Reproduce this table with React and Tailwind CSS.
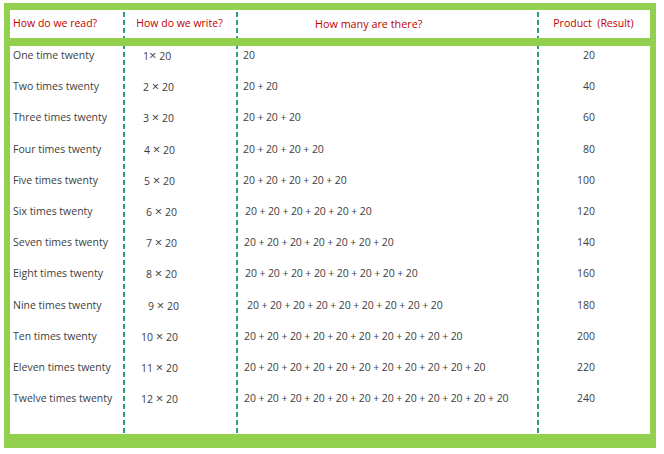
const rows = [
  { read: 'One time twenty', n: '1', sp: '', wpad: 'pl-[20px]', many: 1, mpad: 'pl-[7px]', result: 20 },
  { read: 'Two times twenty', n: '2', sp: ' ', wpad: 'pl-[20px]', many: 2, mpad: 'pl-[7px]', result: 40 },
  { read: 'Three times twenty', n: '3', sp: ' ', wpad: 'pl-[20px]', many: 3, mpad: 'pl-[7px]', result: 60 },
  { read: 'Four times twenty', n: '4', sp: ' ', wpad: 'pl-[21px]', many: 4, mpad: 'pl-[7px]', result: 80 },
  { read: 'Five times twenty', n: '5', sp: ' ', wpad: 'pl-[21px]', many: 5, mpad: 'pl-[7px]', result: 100 },
  { read: 'Six times twenty', n: '6', sp: ' ', wpad: 'pl-[23px]', many: 6, mpad: 'pl-[9px]', result: 120 },
  { read: 'Seven times twenty', n: '7', sp: ' ', wpad: 'pl-[23px]', many: 7, mpad: 'pl-[8px]', result: 140 },
  { read: 'Eight times twenty', n: '8', sp: ' ', wpad: 'pl-[23px]', many: 8, mpad: 'pl-[9px]', result: 160 },
  { read: 'Nine times twenty', n: '9', sp: ' ', wpad: 'pl-[25px]', many: 9, mpad: 'pl-[11px]', result: 180 },
  { read: 'Ten times twenty', n: '10', sp: ' ', wpad: 'pl-[18px]', many: 10, mpad: 'pl-[8px]', result: 200 },
  { read: 'Eleven times twenty', n: '11', sp: ' ', wpad: 'pl-[18px]', many: 11, mpad: 'pl-[8px]', result: 220 },
  { read: 'Twelve times twenty', n: '12', sp: ' ', wpad: 'pl-[18px]', many: 12, mpad: 'pl-[8px]', result: 240 },
];

const dash =
  'bg-[linear-gradient(#2a9f6f_60%,transparent_0)] bg-[length:2px_8px] bg-repeat-y bg-left';

const cell = 'h-[31.2px] pt-[2px] leading-[14px] whitespace-nowrap';

export default function App() {
  return (
    <div
      className="bg-white w-[664px] h-[454px] pt-[3px] pl-[4px] text-[10.5px] text-[#404040]"
      style={{ fontFamily: '"Open Sans", "Liberation Sans", sans-serif' }}
    >
      <div className="w-[652px] border-l-[6px] border-t-[7px] border-r-[6px] border-b-[14px] border-[#92d050] bg-white">
        {/* header */}
        <div className="grid grid-cols-[113px_113px_301px_113px] h-[28px] text-[#c00000]">
          <div className="pl-[3px] flex items-center">How do we read?</div>
          <div className={`${dash} flex items-center justify-center`}>How do we write?</div>
          <div className={`${dash} flex items-center pl-[79px] text-[10.8px]`}>How many are there?</div>
          <div className={`${dash} flex items-center justify-center`}>Product&nbsp;&nbsp;(Result)</div>
        </div>

        <div className="h-[8px] bg-[#92d050]" />

        {/* body */}
        <div className="grid grid-cols-[113px_113px_301px_113px] h-[388px]">
          <div className="pl-[3px]">
            {rows.map((r) => (
              <div key={r.read} className={cell}>{r.read}</div>
            ))}
          </div>
          <div className={dash}>
            {rows.map((r) => (
              <div key={r.read} className={`${cell} ${r.wpad}`}>
                {r.n}{r.sp}<span className="text-[13px] leading-[14px]">×</span> 20
              </div>
            ))}
          </div>
          <div className={dash}>
            {rows.map((r) => (
              <div key={r.read} className={`${cell} ${r.mpad} tracking-[-0.1px]`}>
                {Array(r.many).fill('20').join(' + ')}
              </div>
            ))}
          </div>
          <div className={dash}>
            {rows.map((r) => (
              <div key={r.read} className={`${cell} text-right pr-[55px]`}>{r.result}</div>
            ))}
          </div>
        </div>
      </div>
    </div>
  );
}
